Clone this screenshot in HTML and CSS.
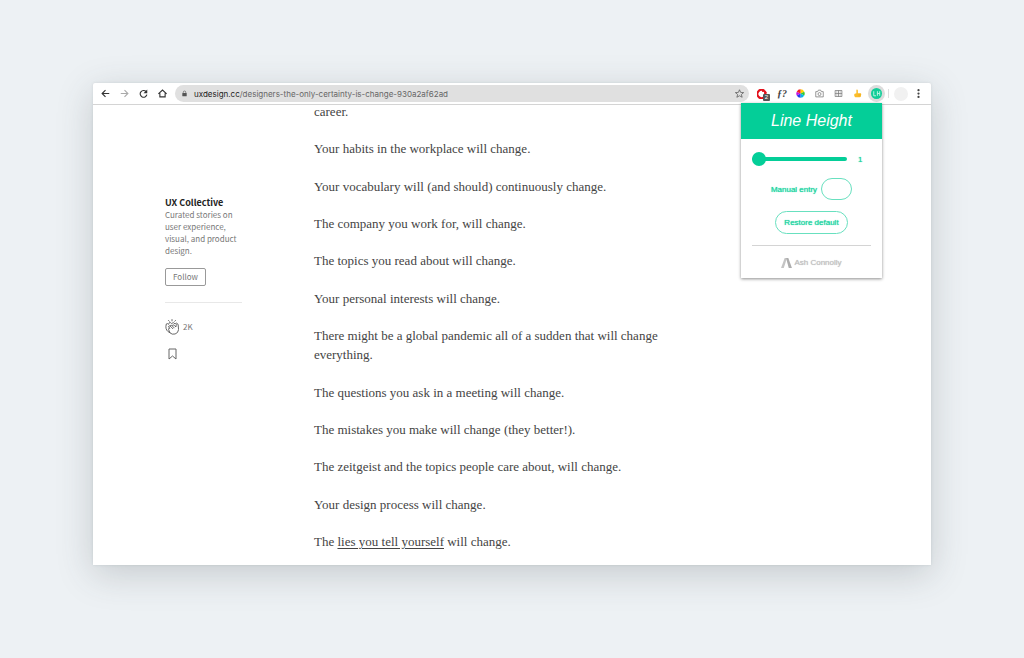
FILE: index.html
```html
<!DOCTYPE html>
<html lang="en">
<head>
<meta charset="utf-8">
<title>The only certainty is change</title>
<link rel="stylesheet" href="styles.css">
</head>
<body>
<div class="browser">
  <header class="toolbar">
    <nav class="nav">
      <button class="icon-btn" aria-label="Back"><svg viewBox="0 0 24 24"><path d="M22 12H4M12 3l-9 9 9 9" fill="none" stroke="#333" stroke-width="3"/></svg></button>
      <button class="icon-btn" aria-label="Forward"><svg viewBox="0 0 24 24"><path d="M2 12h18M12 3l9 9-9 9" fill="none" stroke="#aaa" stroke-width="3"/></svg></button>
      <button class="icon-btn" aria-label="Reload"><svg viewBox="0 0 24 24"><path d="M19 7a9 9 0 1 0 2 8" fill="none" stroke="#333" stroke-width="3"/><path d="M22 1v10H12z" fill="#333"/></svg></button>
      <button class="icon-btn" aria-label="Home"><svg viewBox="0 0 24 24"><path d="M1 13L12 3l11 10M5 11v10h14V11" fill="none" stroke="#333" stroke-width="3"/></svg></button>
    </nav>
    <div class="address">
      <svg class="lock" viewBox="0 0 16 20"><path d="M4 9V6a4 4 0 0 1 8 0v3" fill="none" stroke="#555" stroke-width="2"/><rect x="1" y="8" width="14" height="11" rx="2" fill="#555"/></svg>
      <span class="url"><span class="host">uxdesign.cc</span>/designers-the-only-certainty-is-change-930a2af62ad</span>
      <button class="icon-btn" aria-label="Bookmark this page"><svg viewBox="0 0 24 24"><path d="M12 2l3 7 8 .6-6 5 2 7.400-7-4-7 4 2-7.400-6-5L9 9z" fill="none" stroke="#555" stroke-width="2"/></svg></button>
    </div>
    <div class="extensions">
      <button class="icon-btn blocker" aria-label="Ad blocker"><svg viewBox="0 0 24 24"><path d="M17 4A10 10 0 1 0 17 20" fill="none" stroke="#e3101b" stroke-width="5"/><path d="M12 1q9 0 11 7v6H13z" fill="#e3101b"/><path d="M12 7h5v9h-5z" fill="#fff"/></svg><span class="count">2</span></button>
      <button class="icon-btn font-tool" aria-label="Font finder">ƒ?</button>
      <button class="icon-btn" aria-label="Color picker"><svg viewBox="0 0 24 24"><path d="M12 12V1a11 11 0 0 1 10 6z" fill="#ffd500"/><path d="M12 12l10-5a11 11 0 0 1 0 10z" fill="#35c932"/><path d="M12 12l10 5a11 11 0 0 1-10 6z" fill="#08b6e8"/><path d="M12 12v11a11 11 0 0 1-10-6z" fill="#213bed"/><path d="M12 12l-10 5A11 11 0 0 1 2 7z" fill="#c714df"/><path d="M12 12L2 7a11 11 0 0 1 10-6z" fill="#f22424"/></svg></button>
      <button class="icon-btn" aria-label="Screenshot"><svg viewBox="0 0 24 24"><path d="M2 7h5l2-4h6l2 4h5v14H2z" fill="none" stroke="#777" stroke-width="2"/><circle cx="12" cy="13.500" r="4" fill="none" stroke="#777" stroke-width="2"/></svg></button>
      <button class="icon-btn" aria-label="Grid"><svg viewBox="0 0 24 24"><path d="M3 4h18v16H3zM12 4v16M3 12h18M6 8h3M15 8h3M6 16h3M15 16h3" fill="none" stroke="#777" stroke-width="2"/></svg></button>
      <button class="icon-btn" aria-label="Pointer"><svg viewBox="0 0 24 24"><path d="M9 2q3-2 4 2v7h7q2 0 2 3l-1 6q-1 2-3 2H6q-3-2-3-7 0-3 6-4z" fill="#fbbd2a"/><path d="M14 14h7M14 18h6" stroke="#e89a15" stroke-width="1"/></svg></button>
      <button class="icon-btn active-ext" aria-label="Line Height"><svg viewBox="0 0 24 24"><circle cx="12" cy="12" r="12" fill="#12cd98"/><path d="M6 7v10h5M14 7v10M19 7v10M14 12h5" fill="none" stroke="#c4f7e7" stroke-width="2"/></svg></button>
      <span class="divider"></span>
      <span class="avatar"></span>
      <button class="icon-btn" aria-label="Menu"><svg viewBox="0 0 24 24"><g fill="#444"><circle cx="12" cy="3" r="3"/><circle cx="12" cy="12" r="3"/><circle cx="12" cy="21" r="3"/></g></svg></button>
    </div>
  </header>

  <main class="page">
    <aside class="sidebar">
      <h2 class="publication">UX Collective</h2>
      <p class="about">Curated stories on user experience, visual, and product design.</p>
      <button class="follow">Follow</button>
      <hr class="rule">
      <div class="claps">
        <button class="clap-btn" aria-label="Clap"><svg viewBox="0 0 32 36"><g fill="none" stroke="#555" stroke-width="2" stroke-linecap="round" stroke-linejoin="round"><path d="M10 5L8 3M16 4V1M22 5l2-2"/><path d="M11 31C4 28 2 23 2 17l1-6q3-2 5 1l2-4q3-1 5 2l4-2 4 3 3-2 4 3 1 12q-1 8-8 10-7 2-12-3L8 23q0-3 3-2l-3-4q1-3 4-1l6 6M12 16q0-3 3-2l6 6M17 14q2-2 4 0l4 4q-1-5 2-6"/></g></svg></button>
        <span>2K</span>
      </div>
      <button class="save-btn" aria-label="Save story"><svg viewBox="0 0 18 24"><path d="M2 2h14v20l-7-6-7 6z" fill="none" stroke="#666" stroke-width="2"/></svg></button>
    </aside>
    <article class="story">
      <p>career.</p>
      <p>Your habits in the workplace will change.</p>
      <p>Your vocabulary will (and should) continuously change.</p>
      <p>The company you work for, will change.</p>
      <p>The topics you read about will change.</p>
      <p>Your personal interests will change.</p>
      <p>There might be a global pandemic all of a sudden that will change everything.</p>
      <p>The questions you ask in a meeting will change.</p>
      <p>The mistakes you make will change (they better!).</p>
      <p>The zeitgeist and the topics people care about, will change.</p>
      <p>Your design process will change.</p>
      <p>The <a href="#">lies you tell yourself</a> will change.</p>
    </article>
  </main>

  <section class="popup">
    <h1 class="popup-title">Line Height</h1>
    <div class="popup-body">
      <div class="slider-row">
        <input class="slider" id="height" type="range" min="1" max="5" value="1" aria-label="Line height">
        <output for="height">1</output>
      </div>
      <div class="manual-row">
        <label for="manual">Manual entry</label>
        <input class="manual" id="manual" type="text">
      </div>
      <button class="restore">Restore default</button>
      <footer class="credit">
        <svg viewBox="0 0 24 22"><path d="M8 0h5L6 22H0z" fill="#c4c4c4"/><path d="M11 0h5l8 22h-7z" fill="#adadad"/></svg>
        <span>Ash Connolly</span>
      </footer>
    </div>
  </section>
</div>
</body>
</html>
```
FILE: styles.css
```css
* { box-sizing: border-box; }
body {
  margin: 0;
  min-height: 100vh;
  display: flex;
  padding: 83px 93px 93px;
  background: #edf1f4;
  font-family: "Liberation Sans", Arial, sans-serif;
}
button { border: 0; background: none; padding: 0; font: inherit; color: inherit; }
svg { display: block; width: 100%; height: 100%; }
h1, h2, p { margin: 0; }

.browser {
  position: relative;
  flex: 1;
  display: flex;
  flex-direction: column;
  background: #fff;
  border-radius: 2px 2px 0 0;
  box-shadow: 0 9px 36px rgba(60, 70, 75, .22), 0 0 3px rgba(60, 70, 75, .12);
}

.toolbar {
  display: flex;
  align-items: center;
  gap: 8px;
  padding: 2px 8px;
  border-bottom: 1px solid #d4d4d4;
}
.nav { display: flex; gap: 10px; }
.icon-btn { flex: none; width: 9px; height: 9px; }
.address {
  flex: 1;
  display: flex;
  align-items: center;
  height: 17px;
  padding: 0 5px 0 7px;
  border-radius: 9px;
  background: #e0e0e0;
}
.lock { width: 5px; height: 7px; margin-right: 7px; }
.url { flex: 1; font: 8px/12px Inter, sans-serif; color: #666; }
.host { color: #222; }
.extensions { display: flex; align-items: center; gap: 10px; }
.blocker { position: relative; width: 10px; height: 10px; }
.count {
  position: absolute;
  left: 6px;
  top: 5px;
  width: 7px;
  height: 7px;
  border-radius: 1px;
  background: #555;
  color: #fff;
  font-size: 6px;
  line-height: 7px;
}
.font-tool { font: italic bold 10px/9px "Liberation Serif", serif; color: #444; }
.active-ext { margin: 0 -4px; width: 17px; height: 17px; padding: 3px; border-radius: 50%; background: #dcdcdc; }
.divider { width: 1px; height: 9px; margin: 0 -5px 0 -3px; background: #ddd; }
.avatar { width: 14px; height: 14px; margin-right: -4px; border-radius: 50%; background: #f1f1f1; }

.page {
  flex: 1;
  display: grid;
  grid-template-columns: 77px minmax(0, 350px);
  column-gap: 72px;
  padding: 0 72px;
  overflow: hidden;
}
.sidebar {
  padding-top: 91px;
  font: 8px/12px "Noto Sans CJK SC", sans-serif;
  color: #777;
}
.publication { font-size: 9px; line-height: 13px; font-weight: 700; color: #222; }
.follow {
  display: block;
  height: 18px;
  margin-top: 11px;
  padding: 0 7px;
  border: 1px solid #999;
  border-radius: 2px;
  line-height: 16px;
}
.rule { height: 1px; margin: 16px 0; border: 0; background: #e8e8e8; }
.claps { display: flex; align-items: center; gap: 4px; }
.clap-btn { width: 14px; height: 16px; }
.save-btn { display: block; width: 9px; height: 12px; margin: 13px 0 0 3px; }

.story {
  display: flex;
  flex-direction: column;
  justify-content: space-between;
  margin-top: -3px;
  padding-bottom: 14px;
  font: 13px/19px "Liberation Serif", serif;
  color: #444;
}
.story a { color: inherit; text-underline-offset: 2px; }

.popup {
  position: absolute;
  top: 20px;
  right: 49px;
  width: 141px;
  background: #fff;
  box-shadow: 0 1px 3px rgba(0, 0, 0, .45);
  color: #1bd3a0;
  font-size: 8px;
}
.popup-body label, .restore, .popup output, .credit span { text-shadow: 0 0 1px; }
.popup-title {
  background: #04ce98;
  color: #fff;
  font: italic 16px/36px "Liberation Sans", sans-serif;
  text-align: center;
}
.popup-body { padding: 12px 11px 10px; }
.slider-row { display: flex; align-items: center; gap: 11px; height: 16px; }
.slider { appearance: none; width: 95px; height: 14px; margin: 0; background: none; }
.slider::-webkit-slider-runnable-track { height: 4px; border-radius: 2px; background: #04ce98; }
.slider::-webkit-slider-thumb { appearance: none; width: 14px; height: 14px; margin-top: -5px; border-radius: 50%; background: #04ce98; }
.manual-row { display: flex; align-items: center; justify-content: center; gap: 4px; margin-top: 11px; }
.manual { width: 31px; height: 22px; border: 1px solid #68e0bf; border-radius: 11px; background: #fff; }
.restore {
  display: block;
  height: 23px;
  margin: 11px auto;
  padding: 0 8px;
  border: 1px solid #68e0bf;
  border-radius: 12px;
}
.credit {
  display: flex;
  align-items: center;
  justify-content: center;
  gap: 2px;
  padding-top: 11px;
  border-top: 1px solid #d4d4d4;
  color: #c0c0c0;
  line-height: 11px;
}
.credit svg { width: 11px; height: 10px; }
```
